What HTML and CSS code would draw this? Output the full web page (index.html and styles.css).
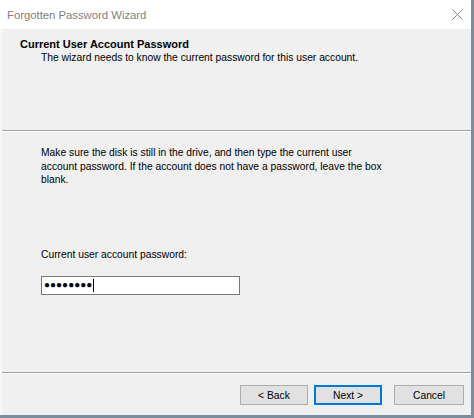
FILE: index.html
```html
<!DOCTYPE html>
<html lang="en">
<head>
    <meta charset="UTF-8">
    <title>Forgotten Password Wizard</title>
    <link rel="stylesheet" href="styles.css">
</head>
<body>
    <div class="window">
        <div class="titlebar">
            <span class="title">Forgotten Password Wizard</span>
            <svg class="close" width="11" height="11" viewBox="0 0 11 11">
                <path d="M0.5 0.5 L10.5 10.5 M10.5 0.5 L0.5 10.5" stroke="#8a8a8a" stroke-width="1" fill="none"/>
            </svg>
        </div>

        <div class="header">
            <div class="header-title">Current User Account Password</div>
            <div class="header-sub">The wizard needs to know the current password for this user account.</div>
        </div>
        <div class="separator"></div>

        <div class="content">
            <p class="intro">Make sure the disk is still in the drive, and then type the current user<br>account password. If the account does not have a password, leave the box<br>blank.</p>
            <label class="field-label" for="pw">Current user account password:</label>
            <div class="field">
                <span class="dots">&#9679;&#9679;&#9679;&#9679;&#9679;&#9679;&#9679;&#9679;</span><span class="caret"></span>
            </div>
        </div>
        <div class="separator"></div>

        <div class="footer">
            <button class="btn">&lt; Back</button>
            <button class="btn default">Next &gt;</button>
            <button class="btn cancel">Cancel</button>
        </div>
    </div>
</body>
</html>
```

FILE: styles.css
```css
body {
    margin: 0;
    width: 474px;
    height: 418px;
    background-color: #7b8c9b;
    font-family: "Liberation Sans", Arial, sans-serif;
    font-size: 10.3px;
    color: #000;
    overflow: hidden;
}
.window {
    width: 471px;
    height: 415px;
    background-color: #f0f0f0;
    display: flex;
    flex-direction: column;
    border-left: 2px solid #f7f7f7;
    box-sizing: border-box;
}
.titlebar {
    height: 29px;
    flex: none;
    background-color: #fff;
    display: flex;
    align-items: center;
    justify-content: space-between;
    padding: 0 8px 0 7px;
    margin-left: -2px;
}
.title {
    font-size: 11.3px;
    color: #7f7f7f;
}
.close {
    margin-top: -1px;
}
.header {
    height: 101px;
    flex: none;
    padding: 8px 0 0 18px;
    box-sizing: border-box;
}
.header-title {
    font-weight: bold;
    font-size: 11px;
    line-height: 14px;
}
.header-sub {
    padding-left: 21px;
    line-height: 14px;
}
.separator {
    flex: none;
    border-top: 1px solid #a0a0a0;
    border-bottom: 1px solid #fff;
}
.content {
    flex: 1;
    padding: 14px 0 0 39px;
}
.intro {
    margin: 0;
    line-height: 13.5px;
}
.field-label {
    display: block;
    margin-top: 61px;
    line-height: 14px;
}
.field {
    margin-top: 14px;
    width: 199px;
    height: 19px;
    border: 1px solid #7a7a7a;
    background-color: #fff;
    display: flex;
    align-items: center;
    padding-left: 2px;
    box-sizing: border-box;
}
.dots {
    font-size: 10px;
    line-height: 12px;
}
.caret {
    width: 1px;
    height: 13px;
    background-color: #000;
    margin-left: 1px;
}
.footer {
    height: 41px;
    flex: none;
    display: flex;
    align-items: flex-start;
    padding: 11px 0 0 238px;
    gap: 6px;
    box-sizing: border-box;
}
.btn {
    width: 68px;
    height: 20px;
    background-color: #e1e1e1;
    border: 1px solid #adadad;
    font-family: "Liberation Sans", Arial, sans-serif;
    font-size: 10.3px;
    color: #000;
    padding: 0;
}
.btn.default {
    border: 2px solid #0078d7;
}
.btn.cancel {
    margin-left: 6px;
    width: 70px;
}
```
